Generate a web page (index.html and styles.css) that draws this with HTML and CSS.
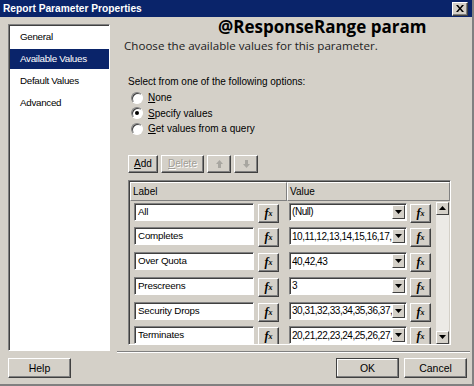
FILE: index.html
```html
<!DOCTYPE html>
<html lang="en">

<head>
    <meta charset="UTF-8">
    <title>Report Parameter Properties</title>
    <link rel="stylesheet" href="styles.css">
</head>

<body>
    <div class="window">
        <div class="titlebar">
            <span class="title">Report Parameter Properties</span>
            <span class="close">
                <svg width="8" height="7" viewBox="0 0 8 7"><path d="M0 0h2l2 2.5 2-2.5h2l-3 3.5 3 3.5h-2l-2-2.5-2 2.5h-2l3-3.5z" fill="#000"/></svg>
            </span>
        </div>

        <div class="main">
            <ul class="nav">
                <li>General</li>
                <li class="active">Available Values</li>
                <li>Default Values</li>
                <li>Advanced</li>
            </ul>

            <div class="pane">
                <h1 class="heading">@ResponseRange param</h1>
                <p class="intro">Choose the available values for this parameter.</p>

                <p class="selectText">Select from one of the following options:</p>
                <div class="radios">
                    <label class="radio"><span class="dot"></span><span><u>N</u>one</span></label>
                    <label class="radio"><span class="dot checked"></span><span><u>S</u>pecify values</span></label>
                    <label class="radio"><span class="dot"></span><span><u>G</u>et values from a query</span></label>
                </div>

                <div class="toolbar">
                    <button class="btn btnAdd"><u>A</u>dd</button>
                    <button class="btn btnDelete" disabled><u>D</u>elete</button>
                    <button class="btn btnArrow" disabled>
                        <svg width="7" height="8" viewBox="0 0 7 8"><path d="M3.5 0l3.5 4h-2v4h-3v-4h-2z" fill="#a8a6a0"/></svg>
                    </button>
                    <button class="btn btnArrow" disabled>
                        <svg width="7" height="8" viewBox="0 0 7 8"><path d="M3.5 8l3.5-4h-2v-4h-3v4h-2z" fill="#a8a6a0"/></svg>
                    </button>
                </div>

                <div class="grid">
                    <div class="gridHead">
                        <div class="colLabel">Label</div>
                        <div class="colValue">Value</div>
                    </div>
                    <div class="gridBody">
                        <div class="rows" id="rows"></div>
                        <div class="scrollbar">
                            <span class="sbBtn"><svg width="7" height="4" viewBox="0 0 7 4"><path d="M3.5 0l3.5 4h-7z" fill="#000"/></svg></span>
                            <span class="sbTrack"></span>
                            <span class="sbBtn"><svg width="7" height="4" viewBox="0 0 7 4"><path d="M0 0h7l-3.5 4z" fill="#000"/></svg></span>
                        </div>
                    </div>
                </div>
            </div>
        </div>

        <div class="footer">
            <button class="btn btnBig">Help</button>
            <span class="spacer"></span>
            <button class="btn btnBig btnDefault">OK</button>
            <button class="btn btnBig">Cancel</button>
        </div>
    </div>

    <script>
        // danh sach gia tri
        let values = [
            { label: "All", value: "(Null)" },
            { label: "Completes", value: "10,11,12,13,14,15,16,17," },
            { label: "Over Quota", value: "40,42,43" },
            { label: "Prescreens", value: "3" },
            { label: "Security Drops", value: "30,31,32,33,34,35,36,37," },
            { label: "Terminates", value: "20,21,22,23,24,25,26,27," },
        ];

        function render(data) {
            let elm = "";
            for (let i = 0; i < data.length; i++) {
                elm += `
                    <div class="row">
                        <div class="cell cellLabel">
                            <span class="textbox">${data[i].label}</span>
                            <span class="btn fx"><i>f</i><sub>x</sub></span>
                        </div>
                        <div class="cell cellValue">
                            <span class="combo">
                                <span class="comboText">${data[i].value}</span>
                                <span class="comboBtn"><svg width="7" height="4" viewBox="0 0 7 4"><path d="M0 0h7l-3.5 4z" fill="#000"/></svg></span>
                            </span>
                            <span class="btn fx"><i>f</i><sub>x</sub></span>
                        </div>
                    </div>
                `;
            }
            document.getElementById("rows").innerHTML = elm;
        }
        render(values);
    </script>
</body>

</html>
```

FILE: styles.css
```css
body {
    margin: 0;
    font-family: "Liberation Sans", Arial, sans-serif;
    font-size: 10px;
    color: #000;
}

.window {
    width: 474px;
    height: 386px;
    box-sizing: border-box;
    background: #d4d0c8;
    border-right: 2px solid #808080;
    border-bottom: 2px solid #808080;
    display: flex;
    flex-direction: column;
    overflow: hidden;
}

/* title bar */
.titlebar {
    height: 17px;
    flex: none;
    background: #0a246a;
    display: flex;
    align-items: center;
    padding: 0 4px 0 3px;
}

.title {
    color: #fff;
    font-weight: bold;
    font-size: 10.2px;
    flex: 1;
}

.close {
    width: 14px;
    height: 12px;
    background: #d4d0c8;
    border: 1px solid;
    border-color: #fff #404040 #404040 #fff;
    box-shadow: inset -1px -1px #808080;
    display: flex;
    align-items: center;
    justify-content: center;
}

/* main */
.main {
    flex: 1;
    display: flex;
    min-height: 0;
}

.nav {
    list-style: none;
    margin: 7px 0 0 8px;
    padding: 2px 0 0;
    width: 102px;
    height: 327px;
    box-sizing: border-box;
    background: #fff;
    border: 1px solid;
    border-color: #808080 #fff #fff #808080;
    box-shadow: inset 1px 1px #404040;
    display: flex;
    flex-direction: column;
    gap: 2px;
}

.nav li {
    height: 20px;
    line-height: 20px;
    padding-left: 10px;
    margin-left: 1px;
    font-size: 9.8px;
    letter-spacing: -0.3px;
}

.nav .active {
    background: #0a246a;
    color: #fff;
}

.pane {
    flex: 1;
    margin-left: 7px;
    margin-right: 2px;
    border-bottom: 1px solid #808080;
    box-shadow: 0 1px #fff;
    height: 334px;
}

.heading {
    margin: 0 0 0 101px;
    font-family: "Open Sans", sans-serif;
    font-size: 17px;
    line-height: 20px;
    font-weight: bold;
}

.intro {
    margin: 2px 0 0 7px;
    font-family: "Open Sans", sans-serif;
    font-size: 11.6px;
    line-height: 14px;
    color: #222;
}

.selectText {
    margin: 23px 0 0 11px;
    line-height: 12px;
}

.radios {
    margin: 2px 0 0 14px;
    display: flex;
    flex-direction: column;
}

.radio {
    height: 15.5px;
    display: flex;
    align-items: center;
    gap: 5px;
}

.dot {
    width: 10px;
    height: 10px;
    border-radius: 50%;
    background: #fff;
    border: 1px solid;
    border-color: #808080 #fff #fff #808080;
    box-shadow: inset 1px 1px #404040;
    display: flex;
    align-items: center;
    justify-content: center;
}

.dot.checked::after {
    content: "";
    width: 4px;
    height: 4px;
    border-radius: 50%;
    background: #000;
}

/* buttons */
.btn {
    font-family: "Liberation Sans", Arial, sans-serif;
    font-size: 10px;
    background: #d4d0c8;
    border: 1px solid;
    border-color: #fff #404040 #404040 #fff;
    box-shadow: inset -1px -1px #808080;
    padding: 0;
    color: #000;
    box-sizing: border-box;
    display: inline-flex;
    align-items: center;
    justify-content: center;
}

.toolbar {
    margin: 18px 0 0 11px;
    display: flex;
    gap: 3px;
    height: 18px;
}

.btnAdd {
    width: 30px;
}

.btnDelete {
    width: 43px;
    color: #a09d96;
    text-shadow: 1px 1px #fff;
}

.btnArrow {
    width: 24px;
}

/* grid */
.grid {
    margin: 7px 0 0 11px;
    width: 323px;
    height: 165px;
    box-sizing: border-box;
    border: 1px solid;
    border-color: #808080 #fff #fff #808080;
    box-shadow: inset 1px 1px #404040;
    display: flex;
    flex-direction: column;
    overflow: hidden;
}

.gridHead {
    display: flex;
    height: 19px;
    flex: none;
    margin: 1px 0 0 1px;
}

.gridHead div {
    border: 1px solid;
    border-color: #fff #808080 #808080 #fff;
    box-sizing: border-box;
    line-height: 17px;
    padding-left: 2px;
}

.colLabel {
    width: 157px;
}

.colValue {
    flex: 1;
}

.gridBody {
    flex: 1;
    display: flex;
    min-height: 0;
    padding-left: 1px;
}

.rows {
    flex: 1;
}

.row {
    display: flex;
    height: 24.8px;
    align-items: flex-start;
    padding-top: 2px;
    box-sizing: border-box;
}

.cell {
    display: flex;
    align-items: flex-start;
    gap: 4px;
}

.cellLabel {
    width: 157px;
    padding-left: 4px;
    box-sizing: border-box;
}

.cellValue {
    padding-left: 2px;
    gap: 3px;
}

.textbox {
    width: 120px;
    height: 18px;
    box-sizing: border-box;
    background: #fff;
    border: 1px solid;
    border-color: #808080 #fff #fff #808080;
    box-shadow: inset 1px 1px #404040;
    padding-left: 3px;
    line-height: 16px;
    font-size: 9.8px;
    letter-spacing: -0.2px;
}

.fx {
    width: 21px;
    height: 19px;
    margin-top: 1px;
    font-family: "Liberation Serif", serif;
    font-weight: bold;
    font-size: 12px;
}

.fx sub {
    font-size: 8px;
    font-style: italic;
    vertical-align: -1px;
}

.combo {
    width: 118px;
    height: 18px;
    box-sizing: border-box;
    background: #fff;
    border: 1px solid;
    border-color: #808080 #fff #fff #808080;
    box-shadow: inset 1px 1px #404040;
    display: flex;
    align-items: center;
    padding: 1px 1px 1px 2px;
}

.comboText {
    flex: 1;
    font-size: 10px;
    white-space: nowrap;
    overflow: hidden;
    letter-spacing: -0.45px;
}

.comboBtn {
    width: 13px;
    height: 14px;
    flex: none;
    background: #d4d0c8;
    border: 1px solid;
    border-color: #fff #404040 #404040 #fff;
    box-sizing: border-box;
    display: flex;
    align-items: center;
    justify-content: center;
}

.scrollbar {
    width: 13px;
    display: flex;
    flex-direction: column;
    margin-right: 1px;
    margin-top: 1px;
}

.sbBtn {
    height: 13px;
    box-sizing: border-box;
    background: #d4d0c8;
    border: 1px solid;
    border-color: #fff #404040 #404040 #fff;
    display: flex;
    align-items: center;
    justify-content: center;
}

.sbTrack {
    flex: 1;
    background: #eceae6;
}

/* footer */
.footer {
    height: 33px;
    display: flex;
    align-items: center;
    padding: 0 5px 0 8px;
    gap: 5px;
}

.spacer {
    flex: 1;
}

.btnBig {
    width: 63px;
    height: 20px;
    font-size: 10.5px;
}

.btnDefault {
    border-color: #404040;
    box-shadow: inset -1px -1px #808080, inset 1px 1px #fff;
}
```
